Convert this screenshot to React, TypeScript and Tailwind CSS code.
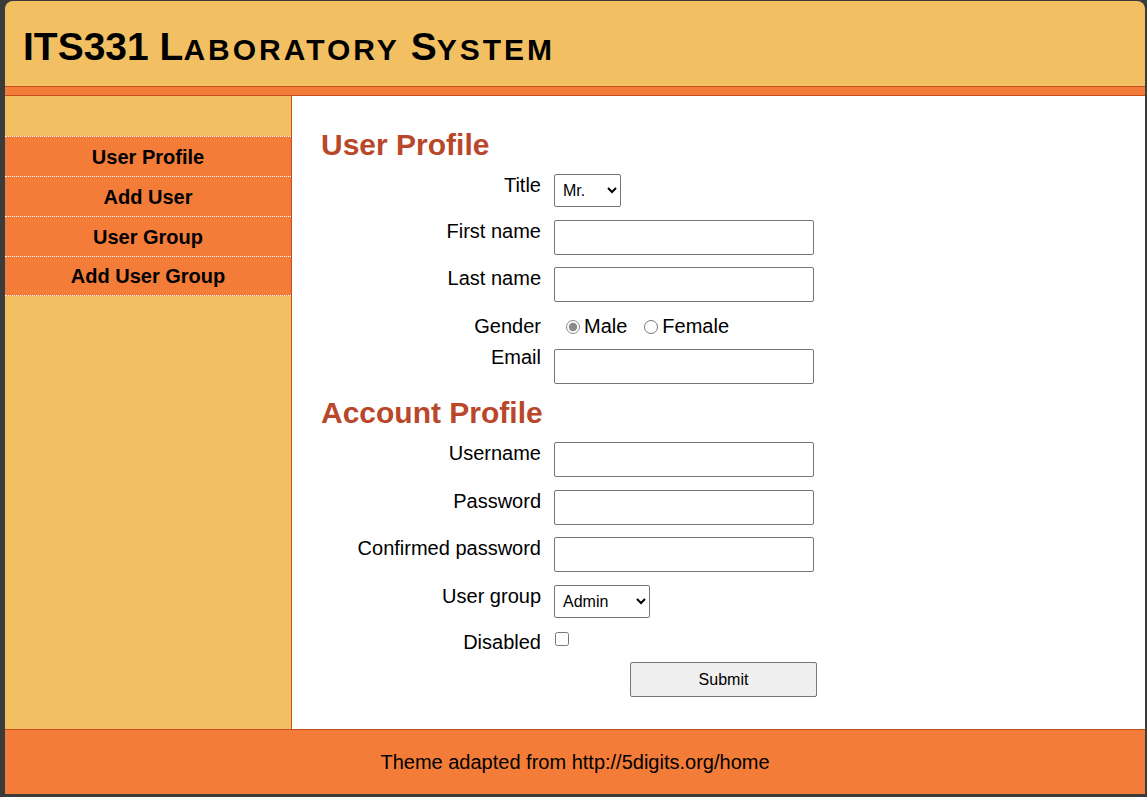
import React from "react";

const NAV_ITEMS = ["User Profile", "Add User", "User Group", "Add User Group"];

function Label({ children }: { children: React.ReactNode }) {
  return (
    <div className="w-[233px] shrink-0 pr-[13px] text-right text-[20px] leading-[23px] text-black">
      {children}
    </div>
  );
}

function TextField({ type = "text" }: { type?: string }) {
  return (
    <input
      type={type}
      className="w-[260px] h-[35px] border border-[#767676] rounded-[2px] bg-white px-1 text-[16px] outline-none"
    />
  );
}

export default function App() {
  return (
    <div
      className="h-[797px] w-[1147px] bg-[#3b3b3b] pt-[1px] pl-[5px] pr-[2px] pb-[3px]"
      style={{ fontFamily: '"Liberation Sans", Arial, sans-serif' }}
    >
      <div className="flex h-full flex-col overflow-hidden rounded-t-[8px]">
        {/* Header */}
        <header className="flex h-[85px] shrink-0 items-center bg-[#f2c063] pl-[18px] pt-[6px]">
          <h1 className="text-[39px] font-bold leading-none text-black">
            ITS331 L<span className="text-[30px] uppercase tracking-[3px]">aboratory</span> S
            <span className="text-[30px] uppercase tracking-[3px]">ystem</span>
          </h1>
        </header>
        <div className="h-[10px] shrink-0 border-y border-[#c44f1d] bg-[#f37c38]" />

        {/* Body */}
        <div className="flex flex-1">
          <aside className="w-[287px] shrink-0 border-r border-[#c44f1d] bg-[#f2c063] pt-[40px]">
            <nav>
              {NAV_ITEMS.map((item, i) => (
                <a
                  key={item}
                  href="#"
                  className={`flex h-[40px] items-center justify-center border-t border-dotted border-white bg-[#f37c38] text-[20px] font-bold text-black ${
                    i === NAV_ITEMS.length - 1 ? "border-b" : ""
                  }`}
                >
                  {item}
                </a>
              ))}
            </nav>
          </aside>

          <main className="flex-1 bg-white pl-[29px] pt-[31px]">
            <h2 className="text-[30px] font-bold leading-[35px] text-[#b9472a]">User Profile</h2>

            <div className="mt-[12px] flex items-start">
              <Label>Title</Label>
              <select className="h-[33px] w-[67px] rounded-[2px] border border-[#767676] bg-white pl-[4px] text-[16px]">
                <option>Mr.</option>
                <option>Mrs.</option>
                <option>Ms.</option>
              </select>
            </div>
            <div className="mt-[13px] flex items-start">
              <Label>First name</Label>
              <TextField />
            </div>
            <div className="mt-[12px] flex items-start">
              <Label>Last name</Label>
              <TextField />
            </div>
            <div className="mt-[13px] flex items-start">
              <Label>Gender</Label>
              <div className="flex items-center pl-[12px] text-[20px] leading-[23px]">
                <label className="flex items-center">
                  <input
                    type="radio"
                    name="gender"
                    defaultChecked
                    className="mr-[4px] h-[14px] w-[14px] accent-[#8a8a8a]"
                  />
                  Male
                </label>
                <label className="ml-[17px] flex items-center">
                  <input type="radio" name="gender" className="mr-[4px] h-[14px] w-[14px]" />
                  Female
                </label>
              </div>
            </div>
            <div className="mt-[8px] flex items-start">
              <Label>Email</Label>
              <div className="pt-[3px]">
                <TextField type="email" />
              </div>
            </div>

            <h2 className="mt-[11px] text-[30px] font-bold leading-[35px] text-[#b9472a]">
              Account Profile
            </h2>

            <div className="mt-[12px] flex items-start">
              <Label>Username</Label>
              <TextField />
            </div>
            <div className="mt-[13px] flex items-start">
              <Label>Password</Label>
              <TextField type="password" />
            </div>
            <div className="mt-[12px] flex items-start">
              <Label>Confirmed password</Label>
              <TextField type="password" />
            </div>
            <div className="mt-[13px] flex items-start">
              <Label>User group</Label>
              <select className="h-[33px] w-[96px] rounded-[2px] border border-[#767676] bg-white pl-[4px] text-[16px]">
                <option>Admin</option>
                <option>Staff</option>
                <option>Student</option>
              </select>
            </div>
            <div className="mt-[13px] flex items-start">
              <Label>Disabled</Label>
              <input type="checkbox" className="mt-[1px] ml-[1px] h-[14px] w-[14px]" />
            </div>
            <div className="mt-[8px] pl-[309px]">
              <button
                type="button"
                className="h-[35px] w-[187px] rounded-[2px] border border-[#767676] bg-[#efefef] text-[16px] text-black"
              >
                Submit
              </button>
            </div>
          </main>
        </div>

        {/* Footer */}
        <footer className="flex h-[65px] shrink-0 items-center justify-center border-t border-[#c44f1d] bg-[#f37c38] text-[20px] text-black">
          Theme adapted from http://5digits.org/home
        </footer>
      </div>
    </div>
  );
}
